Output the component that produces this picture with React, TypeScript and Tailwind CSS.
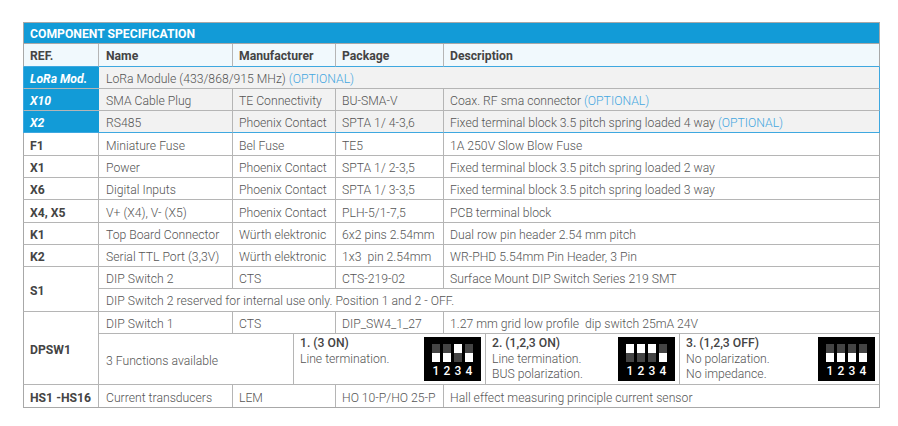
const rowLine = "border-b border-b-[#b5b5b5]";
const blueLine = "border-b border-b-[#3ea8e0]";
const leftEdge = "border-l border-l-[#a8a8a8]";
const rightEdge = "border-r border-r-[#a8a8a8]";
const nameCell = "border-r border-r-[#b5b5b5] pl-[7px] pt-[3px] whitespace-nowrap";
const cell = "border-r border-r-[#b5b5b5] pl-[6px] pt-[3px] whitespace-nowrap";
const descCell = "pl-[6px] pt-[3px] whitespace-nowrap";
const refCell = "border-r border-r-[#b5b5b5] px-[6px] pt-[3px] font-bold text-[#444] whitespace-nowrap " + leftEdge;
const blueCell = "bg-[#129bd7] text-white font-bold italic px-[6px] pt-[3px] border-l border-l-[#3ea8e0]";

type Row = { ref: string; name: string; maker: string; pkg: string; desc: string; h: string };

const rows: Row[] = [
  { ref: "F1", name: "Miniature Fuse", maker: "Bel Fuse", pkg: "TE5", desc: "1A 250V Slow Blow Fuse", h: "h-[23px]" },
  { ref: "X1", name: "Power", maker: "Phoenix Contact", pkg: "SPTA 1/ 2-3,5", desc: "Fixed terminal block 3.5 pitch spring loaded 2 way", h: "h-[22px]" },
  { ref: "X6", name: "Digital Inputs", maker: "Phoenix Contact", pkg: "SPTA 1/ 3-3,5", desc: "Fixed terminal block 3.5 pitch spring loaded 3 way", h: "h-[22px]" },
  { ref: "X4, X5", name: "V+ (X4), V- (X5)", maker: "Phoenix Contact", pkg: "PLH-5/1-7,5", desc: "PCB terminal block", h: "h-[23px]" },
  { ref: "K1", name: "Top Board Connector", maker: "Würth elektronic", pkg: "6x2 pins 2.54mm", desc: "Dual row pin header 2.54 mm pitch", h: "h-[22px]" },
  { ref: "K2", name: "Serial TTL Port (3,3V)", maker: "Würth elektronic", pkg: "1x3\u00a0 pin 2.54mm", desc: "WR-PHD 5.54mm Pin Header, 3 Pin", h: "h-[22px]" },
];

function Optional({ children }: { children: string }) {
  return <span className="text-[#45a7e0]">{children}</span>;
}

// switches: true = lever up
function Dip({ on }: { on: boolean[] }) {
  return (
    <div className="w-[57px] h-[44px] bg-black flex flex-col items-center pt-[7px] shrink-0">
      <div className="flex gap-[3px]">
        {on.map((up, i) => (
          <div key={i} className="w-[8px] h-[18px] bg-[#444] flex flex-col">
            <div className={up ? "h-[9px] bg-white" : "h-[9px]"} />
            <div className={up ? "h-[9px]" : "h-[9px] bg-white"} />
          </div>
        ))}
      </div>
      <div className="flex gap-[3px] text-white font-medium text-[12px] leading-[14px] mt-[2px]">
        {[1, 2, 3, 4].map((n) => (
          <span key={n} className="w-[8px] text-center">{n}</span>
        ))}
      </div>
    </div>
  );
}

function Fn({ title, lines, on, className }: { title: string; lines: string[]; on: boolean[]; className: string }) {
  return (
    <div className={"flex justify-between pl-[6px] " + className}>
      <div className="leading-[15.5px] pt-[2px]">
        <div className="font-medium text-[#444]">{title}</div>
        {lines.map((l) => (
          <div key={l}>{l}</div>
        ))}
      </div>
      <div className="self-end mb-[3px]">
        <Dip on={on} />
      </div>
    </div>
  );
}

export default function App() {
  return (
    <div className="w-[898px] h-[426px] bg-white pt-[22px] pl-[23px] font-['Roboto',sans-serif] text-[12.2px] leading-[16px] font-light text-[#555]">
      <table className="w-[857px] table-fixed border-separate border-spacing-0 border-y border-[#a8a8a8]">
        <colgroup>
          <col className="w-[76px]" />
          <col className="w-[134px]" />
          <col className="w-[103px]" />
          <col className="w-[108px]" />
          <col />
        </colgroup>
        <tbody>
          <tr className="h-[21px] bg-[#129bd7]">
            <td colSpan={5} className={"px-[6px] pt-[2px] font-bold text-white border-b border-b-[#a8a8a8] " + leftEdge + " " + rightEdge}>COMPONENT SPECIFICATION</td>
          </tr>
          <tr className="h-[23px] bg-[#f1f9fd] font-bold text-[#444]">
            <td className={"border-r border-r-[#b5b5b5] px-[6px] pt-[2px] " + blueLine + " " + leftEdge}>REF.</td>
            <td className={"border-r border-r-[#b5b5b5] pl-[7px] pt-[2px] " + blueLine}>Name</td>
            <td className={"border-r border-r-[#b5b5b5] pl-[6px] pt-[2px] " + blueLine}>Manufacturer</td>
            <td className={"border-r border-r-[#b5b5b5] pl-[6px] pt-[2px] " + blueLine}>Package</td>
            <td className={"pl-[6px] pt-[2px] " + blueLine + " " + rightEdge}>Description</td>
          </tr>
          <tr className="h-[22px] bg-[#f2f2f2]">
            <td className={blueCell + " " + rowLine}>LoRa Mod.</td>
            <td colSpan={4} className={"pl-[7px] pt-[2px] border-r border-r-[#3ea8e0] " + rowLine}>
              LoRa Module (433/868/915 MHz) <Optional>(OPTIONAL)</Optional>
            </td>
          </tr>
          <tr className="h-[22px] bg-[#f2f2f2]">
            <td className={blueCell + " " + rowLine}>X10</td>
            <td className={nameCell + " " + rowLine}>SMA Cable Plug</td>
            <td className={cell + " " + rowLine}>TE Connectivity</td>
            <td className={cell + " " + rowLine}>BU-SMA-V</td>
            <td className={descCell + " border-r border-r-[#3ea8e0] " + rowLine}>Coax. RF sma connector <Optional>(OPTIONAL)</Optional></td>
          </tr>
          <tr className="h-[22px] bg-[#f2f2f2]">
            <td className={blueCell + " " + blueLine}>X2</td>
            <td className={nameCell + " " + blueLine}>RS485</td>
            <td className={cell + " " + blueLine}>Phoenix Contact</td>
            <td className={cell + " " + blueLine}>SPTA 1/ 4-3,6</td>
            <td className={descCell + " border-r border-r-[#3ea8e0] " + blueLine}>
              Fixed terminal block 3.5 pitch spring loaded 4 way <Optional>(OPTIONAL)</Optional>
            </td>
          </tr>
          {rows.map((r) => (
            <tr key={r.ref} className={r.h}>
              <td className={refCell + " " + rowLine}>{r.ref}</td>
              <td className={nameCell + " " + rowLine}>{r.name}</td>
              <td className={cell + " " + rowLine}>{r.maker}</td>
              <td className={cell + " " + rowLine}>{r.pkg}</td>
              <td className={descCell + " " + rowLine + " " + rightEdge}>{r.desc}</td>
            </tr>
          ))}
          <tr className="h-[22px]">
            <td rowSpan={2} className={refCell + " " + rowLine}>S1</td>
            <td className={nameCell + " " + rowLine}>DIP Switch 2</td>
            <td className={cell + " " + rowLine}>CTS</td>
            <td className={cell + " " + rowLine}>CTS-219-02</td>
            <td className={descCell + " " + rowLine + " " + rightEdge}>Surface Mount DIP Switch Series 219 SMT</td>
          </tr>
          <tr className="h-[23px]">
            <td colSpan={4} className={"pl-[7px] pt-[2px] " + rowLine + " " + rightEdge}>DIP Switch 2 reserved for internal use only. Position 1 and 2 - OFF.</td>
          </tr>
          <tr className="h-[22px]">
            <td rowSpan={2} className={refCell + " " + rowLine}>DPSW1</td>
            <td className={nameCell + " " + rowLine}>DIP Switch 1</td>
            <td className={cell + " " + rowLine}>CTS</td>
            <td className={cell + " " + rowLine}>DIP_SW4_1_27</td>
            <td className={descCell + " " + rowLine + " " + rightEdge}>1.27 mm grid low profile{"\u00a0 "}dip switch 25mA 24V</td>
          </tr>
          <tr className="h-[51px]">
            <td colSpan={4} className={"p-0 " + rowLine + " " + rightEdge}>
              <div className="flex h-[50px]">
                <div className="w-[195px] border-r border-[#b5b5b5] pl-[7px] pt-[3px] flex items-center">3 Functions available</div>
                <Fn className="w-[192px] pr-[4px] border-r border-[#b5b5b5]" title="1. (3 ON)" lines={["Line termination."]} on={[false, false, true, false]} />
                <Fn className="w-[194px] pr-[4px] border-r border-[#b5b5b5]" title="2. (1,2,3 ON)" lines={["Line termination.", "BUS polarization."]} on={[true, true, true, false]} />
                <Fn className="flex-1 pr-[4px]" title="3. (1,2,3 OFF)" lines={["No polarization.", "No impedance."]} on={[false, false, false, false]} />
              </div>
            </td>
          </tr>
          <tr className="h-[22px]">
            <td className={refCell}>HS1 -HS16</td>
            <td className={nameCell}>Current transducers</td>
            <td className={cell}>LEM</td>
            <td className={cell}>HO 10-P/HO 25-P</td>
            <td className={descCell + " " + rightEdge}>Hall effect measuring principle current sensor</td>
          </tr>
        </tbody>
      </table>
    </div>
  );
}
